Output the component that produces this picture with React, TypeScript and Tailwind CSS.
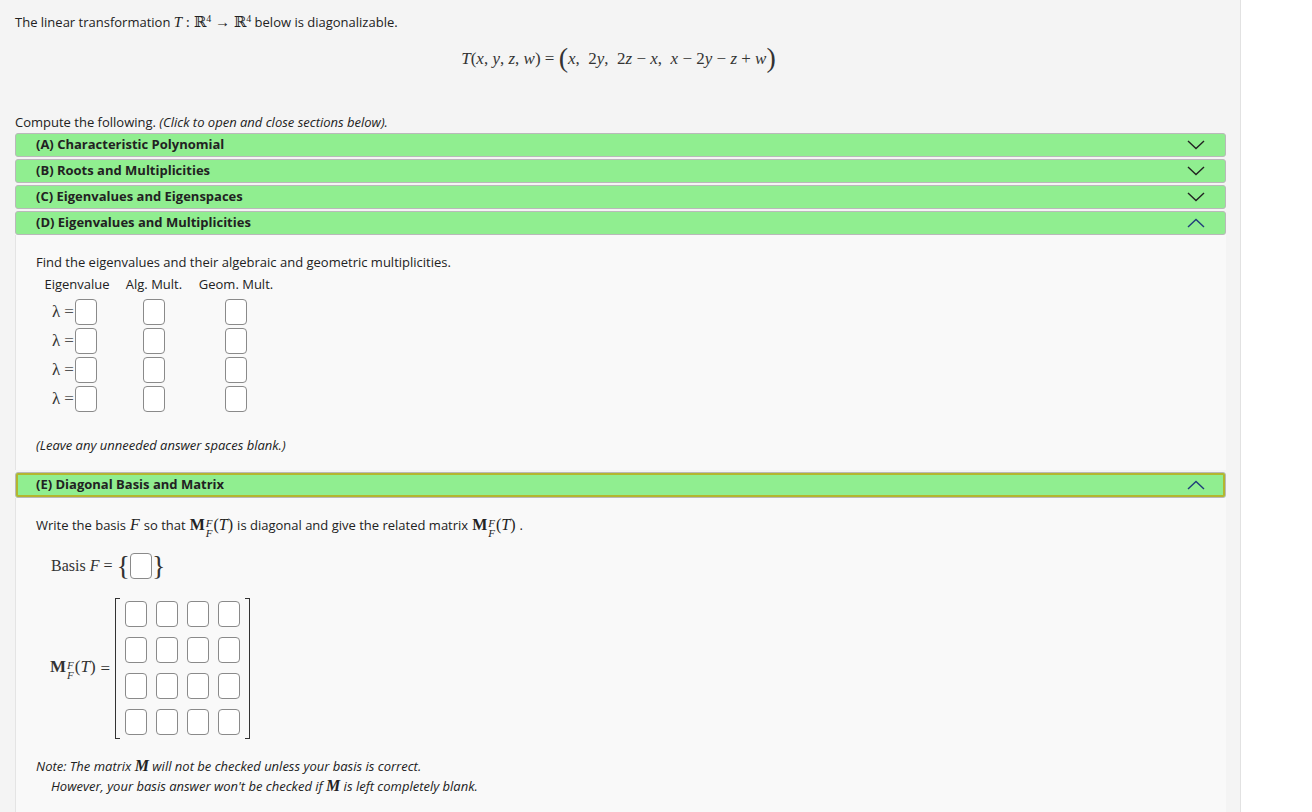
import React from 'react';

const sans = { fontFamily: '"Open Sans", "Noto Sans", sans-serif' };
const serif = { fontFamily: '"Liberation Serif", "DejaVu Serif", serif' };

function Chevron({ up }: { up?: boolean }) {
  return (
    <svg width="18" height="10" viewBox="0 0 18 10" className="shrink-0">
      {up ? (
        <polyline points="1,9 9,1.5 17,9" fill="none" stroke="#1f3d7a" strokeWidth="1.4" />
      ) : (
        <polyline points="1,1 9,8.5 17,1" fill="none" stroke="#222" strokeWidth="1.4" />
      )}
    </svg>
  );
}

function Header({ label, open, focused }: { label: string; open?: boolean; focused?: boolean }) {
  return (
    <div
      className={
        'flex items-center justify-between bg-[#90ee90] border border-[#b9b9b9] rounded-[3px] pl-[20px] pr-[20px] ' +
        (focused ? 'h-[26px] outline-2 outline-[#b3b62f] -outline-offset-3' : 'h-[24px]')
      }
    >
      <span className="text-[13px] font-bold text-[#222]">{label}</span>
      <Chevron up={open} />
    </div>
  );
}

function Box() {
  return <div className="w-[22px] h-[26px] bg-white border border-[#8a8a8a] rounded-[4px]" />;
}

function MFT() {
  return (
    <span className="inline-flex items-baseline" style={serif}>
      <span className="font-bold">M</span>
      <span className="inline-flex flex-col text-[11px] italic leading-[10px] -translate-y-[3px] mx-[1px]">
        <span>F</span>
        <span>F</span>
      </span>
      <span>(</span>
      <span className="italic">T</span>
      <span>)</span>
    </span>
  );
}

function Lambda() {
  return (
    <div className="flex items-center text-[17px] text-[#333]" style={serif}>
      <span className="mr-[4px]">λ</span>
      <span className="mr-[1px] text-[#555]">=</span>
      <Box />
    </div>
  );
}

export default function App() {
  const rows = [0, 1, 2, 3];
  return (
    <div className="w-full min-h-[812px] bg-white" style={sans}>
      <div className="w-[1241px] min-h-[812px] bg-[#f4f4f4] border-r border-[#e2e2e2] pl-[15px] pr-[14px] pt-[12px] text-[13px] text-[#222]">
        <p className="h-[20px] leading-[20px]">
          The linear transformation{' '}
          <span style={serif} className="text-[15px]">
            <i>T</i> : ℝ<sup className="text-[10px]">4</sup> → ℝ<sup className="text-[10px]">4</sup>
          </span>{' '}
          below is diagonalizable.
        </p>

        <div className="flex justify-center mt-[12px] h-[30px] items-center text-[17px] text-[#333] pr-[4px]" style={serif}>
          <span className="flex items-center">
            <i>T</i>(<i>x</i>,&nbsp;<i>y</i>,&nbsp;<i>z</i>,&nbsp;<i>w</i>)&nbsp;=&nbsp;
            <span className="text-[28px] leading-none font-light -translate-y-[1px]">(</span>
            <i>x</i>,&nbsp;&nbsp;2<i>y</i>,&nbsp;&nbsp;2<i>z</i>&nbsp;−&nbsp;<i>x</i>,&nbsp;&nbsp;<i>x</i>&nbsp;−&nbsp;2<i>y</i>&nbsp;−&nbsp;<i>z</i>&nbsp;+&nbsp;<i>w</i>
            <span className="text-[28px] leading-none font-light -translate-y-[1px]">)</span>
          </span>
        </div>

        <p className="mt-[38px] h-[20px] leading-[20px]">
          Compute the following. <i>(Click to open and close sections below).</i>
        </p>

        <div className="flex flex-col gap-[2px] mt-[1px]">
          <Header label="(A) Characteristic Polynomial" />
          <Header label="(B) Roots and Multiplicities" />
          <Header label="(C) Eigenvalues and Eigenspaces" />
          <div>
            <Header label="(D) Eigenvalues and Multiplicities" open />
            <div className="bg-[#f9f9f9] border-l border-[#e4e4e4] pl-[20px] pt-[18px] h-[235px]">
              <p className="leading-[18px]">Find the eigenvalues and their algebraic and geometric multiplicities.</p>
              <div className="grid grid-cols-[76px_78px_86px] ml-[3px] mt-[4px] gap-y-[3px] justify-items-center">
                <span className="leading-[18px] mb-[3px]">Eigenvalue</span>
                <span className="leading-[18px] mb-[3px]">Alg. Mult.</span>
                <span className="leading-[18px] mb-[3px]">Geom. Mult.</span>
                {rows.map(r => (
                  <React.Fragment key={r}>
                    <div className="justify-self-start pl-[13px]">
                      <Lambda />
                    </div>
                    <Box />
                    <Box />
                  </React.Fragment>
                ))}
              </div>
              <p className="italic mt-[24px] leading-[18px]">(Leave any unneeded answer spaces blank.)</p>
            </div>
          </div>
          <div>
            <Header label="(E) Diagonal Basis and Matrix" open focused />
            <div className="bg-[#f9f9f9] border-l border-[#e4e4e4] pl-[20px] pt-[17px] min-h-[316px]">
              <p className="leading-[18px] flex items-baseline gap-[4px]">
                Write the basis <span style={serif} className="italic text-[16px]">F</span> so that{' '}
                <span className="text-[16px]"><MFT /></span> is diagonal and give the related matrix{' '}
                <span className="text-[16px]"><MFT /></span>.
              </p>
              <div className="flex items-center ml-[15px] mt-[11px] text-[16px] text-[#333]" style={serif}>
                <span>Basis&nbsp;<i>F</i>&nbsp;=&nbsp;</span>
                <span className="text-[28px] leading-none font-light">{'{'}</span>
                <Box />
                <span className="text-[28px] leading-none font-light">{'}'}</span>
              </div>
              <div className="flex items-center ml-[14px] mt-[18px] text-[17px] text-[#333]">
                <MFT />
                <span style={serif} className="ml-[5px]">=</span>
                <div className="flex items-stretch ml-[5px] h-[141px]">
                  <div className="w-[5px] border-l-[1.5px] border-t-[1.5px] border-b-[1.5px] border-[#333]" />
                  <div className="grid grid-cols-[repeat(4,22px)] gap-x-[9px] gap-y-[9px] px-[5px] py-[3px]">
                    {Array.from({ length: 16 }).map((_, i) => (
                      <Box key={i} />
                    ))}
                  </div>
                  <div className="w-[5px] border-r-[1.5px] border-t-[1.5px] border-b-[1.5px] border-[#333]" />
                </div>
              </div>
              <p className="italic mt-[17px] leading-[20px]">
                Note: The matrix <span style={serif} className="font-bold text-[16px]">M</span> will not be checked unless your basis is correct.
              </p>
              <p className="italic pl-[15px] leading-[20px]">
                However, your basis answer won't be checked if <span style={serif} className="font-bold text-[16px]">M</span> is left completely blank.
              </p>
            </div>
          </div>
        </div>
      </div>
    </div>
  );
}
